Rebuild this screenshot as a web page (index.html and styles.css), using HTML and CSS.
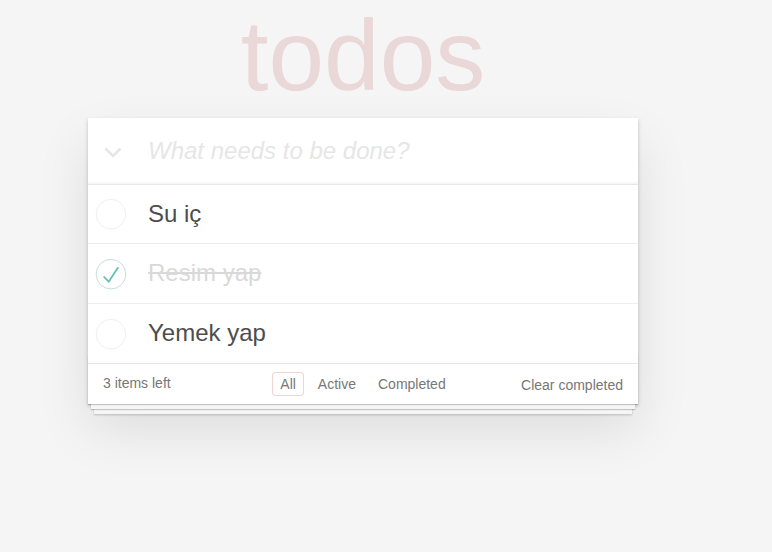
FILE: index.html
```html
<!DOCTYPE html>
<html lang="tr">
<head>
<meta charset="utf-8">
<title>todos</title>
<link rel="stylesheet" href="styles.css">
</head>
<body>
<div class="page">
  <h1 class="title">todos</h1>
  <section class="todoapp">
    <header class="header">
      <span class="toggle-all">
        <svg width="18" height="11" viewBox="0 0 18 11"><polyline points="1.5,1.5 9,9 16.5,1.5" fill="none" stroke="#e6e6e6" stroke-width="2.6"/></svg>
      </span>
      <input class="new-todo" placeholder="What needs to be done?">
    </header>
    <ul class="todo-list">
      <li class="todo">
        <svg class="toggle" width="40" height="40" viewBox="-10 -18 100 135"><circle cx="50" cy="50" r="50" fill="none" stroke="#ededed" stroke-width="3"/></svg>
        <span class="label">Su iç</span>
      </li>
      <li class="todo completed">
        <svg class="toggle" width="40" height="40" viewBox="-10 -18 100 135"><circle cx="50" cy="50" r="50" fill="none" stroke="#bddad5" stroke-width="3"/><path fill="#5dc2af" d="M72 25L42 71 27 56l-4 4 20 20 34-52z"/></svg>
        <span class="label">Resim yap</span>
      </li>
      <li class="todo">
        <svg class="toggle" width="40" height="40" viewBox="-10 -18 100 135"><circle cx="50" cy="50" r="50" fill="none" stroke="#ededed" stroke-width="3"/></svg>
        <span class="label">Yemek yap</span>
      </li>
    </ul>
    <footer class="footer">
      <span class="todo-count">3 items left</span>
      <ul class="filters">
        <li><a class="filter selected" href="#">All</a></li>
        <li><a class="filter" href="#">Active</a></li>
        <li><a class="filter" href="#">Completed</a></li>
      </ul>
      <span class="clear-completed">Clear completed</span>
    </footer>
  </section>
</div>
</body>
</html>
```
FILE: styles.css
```css
html, body {
  margin: 0;
  padding: 0;
}
html {
  background: #f5f5f5;
}
body {
  min-height: 552px;
  background: #f5f5f5;
  color: #4d4d4d;
  font: 14px "Liberation Sans", Arial, sans-serif;
  line-height: 1.4em;
}
.page {
  width: 550px;
  margin-left: 88px;
  padding-top: 5px;
  padding-bottom: 60px;
}
.title {
  margin: 0;
  font-size: 100px;
  line-height: 100px;
  font-weight: 100;
  text-align: center;
  color: rgba(175, 47, 47, 0.15);
}
.todoapp {
  position: relative;
  margin-top: 13px;
  background: #fff;
  box-shadow: 0 2px 4px 0 rgba(0, 0, 0, 0.2), 0 25px 50px 0 rgba(0, 0, 0, 0.1);
}
.header {
  display: flex;
  align-items: center;
  box-shadow: inset 0 -2px 1px rgba(0, 0, 0, 0.03);
}
.toggle-all {
  width: 60px;
  display: flex;
  justify-content: flex-start;
  padding-left: 16px;
  box-sizing: border-box;
  flex: none;
  margin-top: 3px;
}
.toggle-all svg {
  display: block;
}
.new-todo {
  flex: 1;
  min-width: 0;
  margin: 0;
  border: none;
  outline: none;
  background: transparent;
  padding: 16px 16px 16px 0;
  font: inherit;
  font-size: 24px;
  line-height: 1.4em;
  height: 65.6px;
  box-sizing: border-box;
  color: inherit;
}
.new-todo::placeholder {
  font-style: italic;
  color: #e6e6e6;
}
.todo-list {
  margin: 0;
  padding: 0;
  list-style: none;
  border-top: 1px solid #e6e6e6;
}
.todo {
  display: flex;
  align-items: center;
  border-bottom: 1px solid #ededed;
  font-size: 24px;
}
.todo:last-child {
  border-bottom: none;
}
.toggle {
  flex: none;
  display: block;
  margin-right: 20px;
}
.label {
  padding: 15px 15px 15px 0;
  line-height: 1.2;
  display: block;
}
.completed .label {
  color: #d9d9d9;
  text-decoration: line-through;
}
.footer {
  position: relative;
  color: #777;
  padding: 10px 15px;
  height: 20px;
  border-top: 1px solid #e6e6e6;
  display: grid;
  grid-template-columns: 1fr auto 1fr;
  align-items: center;
}
.footer::before {
  content: "";
  position: absolute;
  right: 0;
  bottom: 0;
  left: 0;
  height: 50px;
  overflow: hidden;
  box-shadow: 0 1px 1px rgba(0, 0, 0, 0.2), 0 8px 0 -3px #f6f6f6, 0 9px 1px -3px rgba(0, 0, 0, 0.2), 0 16px 0 -6px #f6f6f6, 0 17px 2px -6px rgba(0, 0, 0, 0.2);
  pointer-events: none;
}
.todo-count {
  justify-self: start;
  position: relative;
  top: -2px;
}
.filters {
  margin: 0;
  padding: 0;
  list-style: none;
  display: flex;
  position: relative;
  top: -2px;
}
.filter {
  display: block;
  color: inherit;
  margin: 0 3px;
  padding: 3px 7px;
  line-height: 16px;
  text-decoration: none;
  border: 1px solid transparent;
  border-radius: 3px;
}
.filter.selected {
  border-color: rgba(175, 47, 47, 0.2);
}
.clear-completed {
  justify-self: end;
  line-height: 20px;
  position: relative;
  top: -1px;
}
```
